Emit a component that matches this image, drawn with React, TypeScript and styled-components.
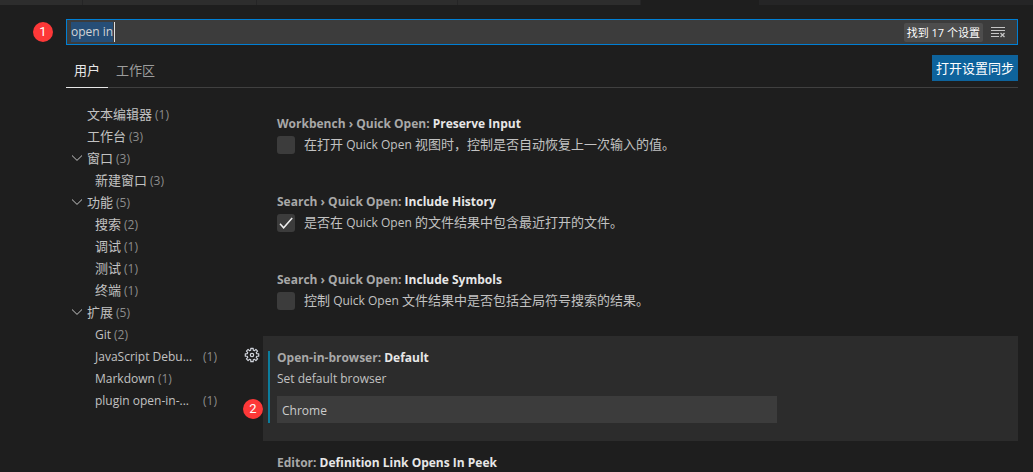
import React, { useEffect, useRef } from "react";
import styled, { createGlobalStyle } from "styled-components";

const GlobalStyle = createGlobalStyle`
  * { box-sizing: border-box; }
  body {
    margin: 0;
    background: #1e1e1e;
    color: #c2c2c2;
    font-family: "Open Sans", "Noto Sans CJK SC", sans-serif;
    font-size: 12px;
    line-height: 22px;
  }
  button, input { font: inherit; color: inherit; }
`;

const Page = styled.div`
  height: 100vh;
  min-height: 320px;
  overflow: hidden;
  display: flex;
  flex-direction: column;
`;

const TabStrip = styled.div`
  display: flex;
  flex: none;
  height: 5px;
  background: #252526;
`;

const EditorTab = styled.div<{ $width: number; $active?: boolean }>`
  width: ${(p) => p.$width}px;
  background: ${(p) => (p.$active ? "#1e1e1e" : "#2d2d2d")};
  border-right: 1px solid #252526;
`;

const Editor = styled.main`
  flex: 1;
  min-height: 0;
  display: flex;
  flex-direction: column;
  padding: 14px 15px 0 66px;
`;

const SearchBox = styled.div`
  position: relative;
  display: flex;
  align-items: center;
  flex: none;
  height: 26px;
  padding: 0 11px 0 4px;
  background: #3c3c3c;
  border: 1px solid #007fd4;
`;

const SearchInput = styled.input`
  flex: 1;
  min-width: 0;
  height: 20px;
  padding: 0;
  border: 0;
  outline: 0;
  background: transparent;
  color: #d4d4d4;
  line-height: 20px;
  &::selection { background: rgba(38, 79, 120, 0.99); color: #d4d4d4; }
`;

const Caret = styled.span`
  position: absolute;
  left: 47px;
  top: 2px;
  width: 1px;
  height: 20px;
  background: #e0e0e0;
`;

const FoundCount = styled.span`
  height: 19px;
  padding: 0 3px;
  border-radius: 2px;
  background: #4d4d4d;
  color: #ffffff;
  font-size: 11px;
  line-height: 19px;
`;

const IconButton = styled.button`
  display: flex;
  padding: 0;
  border: 0;
  background: none;
  color: #c5c5c5;
`;

const ClearButton = styled(IconButton)`
  margin-left: 7px;
`;

const Marker = styled.span`
  position: absolute;
  width: 20px;
  height: 20px;
  border-radius: 50%;
  background: #fd3838;
  color: #ffffff;
  font-family: Roboto, sans-serif;
  font-size: 13px;
  line-height: 20px;
  text-align: center;
`;

const SearchMarker = styled(Marker)`
  left: -34px;
  top: 2px;
`;

const FieldMarker = styled(Marker)`
  left: -34px;
  top: 3px;
`;

const ScopeBar = styled.div`
  display: flex;
  flex: none;
  justify-content: space-between;
  align-items: flex-start;
  height: 43px;
  padding-top: 10px;
  border-bottom: 1px solid #404040;
`;

const ScopeTabs = styled.div`
  display: flex;
`;

const ScopeTab = styled.button<{ $active?: boolean }>`
  height: 33px;
  padding: 0 8px 2px;
  border: 0;
  border-bottom: 1px solid ${(p) => (p.$active ? "#e7e7e7" : "transparent")};
  background: none;
  color: ${(p) => (p.$active ? "#e7e7e7" : "#9d9d9d")};
  font-size: 13px;
  line-height: 30px;
`;

const SyncButton = styled.button`
  height: 26px;
  padding: 0 4px;
  border: 0;
  background: #0e639c;
  color: #ffffff;
  font-size: 13px;
  line-height: 26px;
`;

const Body = styled.div`
  flex: 1;
  min-height: 0;
  display: flex;
`;

const Toc = styled.nav`
  flex: none;
  width: 197px;
  padding-top: 15px;
`;

const TocRow = styled.a<{ $level: number }>`
  display: flex;
  align-items: flex-start;
  height: 22px;
  padding-left: ${(p) => (p.$level === 0 ? 3 : 29)}px;
  color: #c2c2c2;
  text-decoration: none;
  white-space: nowrap;
`;

const Twistie = styled.span`
  flex: none;
  display: flex;
  width: 18px;
  height: 22px;
  align-items: center;
`;

const TocLabel = styled.span<{ $cjk?: boolean; $full?: boolean }>`
  flex: none;
  min-width: ${(p) => (p.$full ? "105px" : "0")};
  line-height: ${(p) => (p.$cjk ? 22 : 24)}px;
`;

const TocCount = styled.span`
  flex: none;
  margin-left: 3px;
  color: #8c8c8c;
  line-height: 24px;
`;

const Cjk = styled.span`
  font-size: 13px;
`;

const SettingList = styled.div`
  flex: 1;
  min-width: 0;
  padding-top: 14px;
`;

const Setting = styled.section<{ $focused?: boolean }>`
  position: relative;
  min-height: ${(p) => (p.$focused ? 105 : 78)}px;
  padding: 11px 14px 0;
  background: ${(p) => (p.$focused ? "#2c2c2c" : "transparent")};
`;

const Title = styled.h3`
  margin: 0;
  color: #a8a8a8;
  font-size: 12px;
  font-weight: 700;
  line-height: 22px;
  white-space: nowrap;
`;

const TitleName = styled.span`
  color: #e7e7e7;
`;

const CheckRow = styled.label`
  display: flex;
  align-items: flex-start;
  padding-top: 1px;
  line-height: 16px;
  white-space: nowrap;
`;

const CheckBox = styled.span`
  position: relative;
  flex: none;
  display: flex;
  width: 18px;
  height: 18px;
  margin-right: 9px;
`;

const CheckInput = styled.input`
  appearance: none;
  width: 18px;
  height: 18px;
  margin: 0;
  border-radius: 3px;
  background: #3c3c3c;
`;

const CheckMark = styled.svg`
  position: absolute;
  inset: 0;
`;

const Description = styled.label`
  display: block;
  line-height: 20px;
`;

const Field = styled.div`
  position: relative;
  margin-top: 7px;
  max-width: 500px;
`;

const TextInput = styled.input`
  display: block;
  width: 100%;
  height: 27px;
  padding: 2px 5px 0;
  border: 0;
  outline: 0;
  background: #3c3c3c;
  color: #cccccc;
`;

const ModifiedBar = styled.span`
  position: absolute;
  left: 5px;
  top: 15px;
  bottom: 18px;
  width: 2px;
  background: #0c7d9d;
`;

const GearButton = styled(IconButton)`
  position: absolute;
  left: -19px;
  top: 11px;
`;

const ChevronDown = () => (
  <svg width="16" height="16" viewBox="0 0 16 16" fill="none" stroke="#c5c5c5">
    <path d="M3 5.500 8 10.400l5-4.900" />
  </svg>
);

const ClearIcon = () => (
  <svg width="16" height="16" viewBox="0 0 16 16" fill="none" stroke="#c5c5c5">
    <path d="M1 3.500h14M1 6.500h14M1 9.500h8M1 12.500h8" />
    <path d="m10.500 9 4 4m0-4-4 4" strokeWidth="1.300" />
  </svg>
);

const gearOutline = Array.from({ length: 8 }, (_, i) =>
  [
    [-10, 6.8],
    [10, 6.8],
    [15, 4.9],
    [30, 4.9],
  ].map(([offset, radius]) => {
    const angle = ((i * 45 + offset) * Math.PI) / 180;
    return `${(8 + radius * Math.sin(angle)).toFixed(2)},${(8 - radius * Math.cos(angle)).toFixed(2)}`;
  })
)
  .flat()
  .join(" ");

const GearIcon = () => (
  <svg width="16" height="16" viewBox="0 0 16 16" fill="none" stroke="#d0d4dc">
    <polygon points={gearOutline} strokeWidth="1.200" strokeLinejoin="round" />
    <circle cx="8" cy="8" r="1.700" strokeWidth="1.200" />
  </svg>
);

type TocItem = {
  label: string;
  count: number;
  level: number;
  cjk?: boolean;
  open?: boolean;
  full?: boolean;
};

const toc: TocItem[] = [
  { label: "文本编辑器", count: 1, level: 0, cjk: true },
  { label: "工作台", count: 3, level: 0, cjk: true },
  { label: "窗口", count: 3, level: 0, cjk: true, open: true },
  { label: "新建窗口", count: 3, level: 1, cjk: true },
  { label: "功能", count: 5, level: 0, cjk: true, open: true },
  { label: "搜索", count: 2, level: 1, cjk: true },
  { label: "调试", count: 1, level: 1, cjk: true },
  { label: "测试", count: 1, level: 1, cjk: true },
  { label: "终端", count: 1, level: 1, cjk: true },
  { label: "扩展", count: 5, level: 0, cjk: true, open: true },
  { label: "Git", count: 2, level: 1 },
  { label: "JavaScript Debu...", count: 1, level: 1, full: true },
  { label: "Markdown", count: 1, level: 1 },
  { label: "plugin open-in-...", count: 1, level: 1, full: true },
];

type CheckSetting = { group: string; name: string; before: string; after: string; checked: boolean };

const checks: CheckSetting[] = [
  {
    group: "Workbench › Quick Open:",
    name: "Preserve Input",
    before: "在打开",
    after: "视图时，控制是否自动恢复上一次输入的值。",
    checked: false,
  },
  {
    group: "Search › Quick Open:",
    name: "Include History",
    before: "是否在",
    after: "的文件结果中包含最近打开的文件。",
    checked: true,
  },
  {
    group: "Search › Quick Open:",
    name: "Include Symbols",
    before: "控制",
    after: "文件结果中是否包括全局符号搜索的结果。",
    checked: false,
  },
];

const CheckItem = ({ group, name, before, after, checked }: CheckSetting) => (
  <Setting>
    <Title>
      {group} <TitleName>{name}</TitleName>
    </Title>
    <CheckRow>
      <CheckBox>
        <CheckInput type="checkbox" defaultChecked={checked} />
        {checked && (
          <CheckMark width="18" height="18" viewBox="0 0 18 18" fill="none" stroke="#f0f0f0" strokeWidth="1.5">
            <path d="m3 9.800 3.600 4L15.200 4" />
          </CheckMark>
        )}
      </CheckBox>
      <span>
        <Cjk>{before}</Cjk> Quick Open <Cjk>{after}</Cjk>
      </span>
    </CheckRow>
  </Setting>
);

export default function App() {
  const search = useRef<HTMLInputElement>(null);

  useEffect(() => {
    search.current?.focus();
    search.current?.select();
  }, []);

  return (
    <Page>
      <GlobalStyle />
      <TabStrip>
        <EditorTab $width={83} />
        <EditorTab $width={174} />
        <EditorTab $width={201} />
        <EditorTab $width={183} />
        <EditorTab $width={119} $active />
      </TabStrip>
      <Editor>
        <SearchBox>
          <SearchMarker>1</SearchMarker>
          <SearchInput ref={search} aria-label="搜索设置" defaultValue="open in" />
          <Caret />
          <FoundCount>找到 17 个设置</FoundCount>
          <ClearButton aria-label="清除">
            <ClearIcon />
          </ClearButton>
        </SearchBox>
        <ScopeBar>
          <ScopeTabs>
            <ScopeTab $active>用户</ScopeTab>
            <ScopeTab>工作区</ScopeTab>
          </ScopeTabs>
          <SyncButton>打开设置同步</SyncButton>
        </ScopeBar>
        <Body>
          <Toc>
            {toc.map((item) => (
              <TocRow key={item.label} href="#" $level={item.level}>
                {item.level === 0 && <Twistie>{item.open && <ChevronDown />}</Twistie>}
                <TocLabel $cjk={item.cjk} $full={item.full}>
                  {item.cjk ? <Cjk>{item.label}</Cjk> : item.label}
                </TocLabel>
                <TocCount>({item.count})</TocCount>
              </TocRow>
            ))}
          </Toc>
          <SettingList>
            {checks.map((item) => (
              <CheckItem key={item.name} {...item} />
            ))}
            <Setting $focused>
              <ModifiedBar />
              <GearButton aria-label="更多操作">
                <GearIcon />
              </GearButton>
              <Title>
                Open-in-browser: <TitleName>Default</TitleName>
              </Title>
              <Description htmlFor="default-browser">Set default browser</Description>
              <Field>
                <FieldMarker>2</FieldMarker>
                <TextInput id="default-browser" defaultValue="Chrome" />
              </Field>
            </Setting>
            <Setting>
              <Title>
                Editor: <TitleName>Definition Link Opens In Peek</TitleName>
              </Title>
            </Setting>
          </SettingList>
        </Body>
      </Editor>
    </Page>
  );
}
